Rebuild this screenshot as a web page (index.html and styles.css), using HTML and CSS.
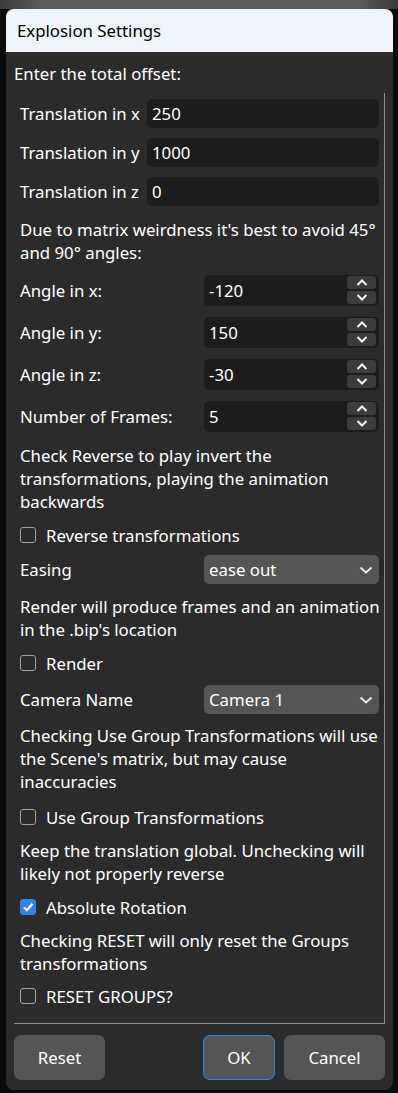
FILE: index.html
```html
<!DOCTYPE html>
<html>
<head>
<meta charset="utf-8">
<link rel="stylesheet" href="styles.css">
</head>
<body>
<div class="topstrip"></div>
<div class="window">
  <div class="titlebar">Explosion Settings</div>
  <div class="content">
    <div class="intro">Enter the total offset:</div>
    <div class="scroll">
      <div class="row"><span class="lbl">Translation in x</span><div class="field">250</div></div>
      <div class="row"><span class="lbl">Translation in y</span><div class="field">1000</div></div>
      <div class="row"><span class="lbl">Translation in z</span><div class="field">0</div></div>
      <p class="txt t1">Due to matrix weirdness it's best to avoid 45°<br>and 90° angles:</p>
      <div class="srow"><span class="lbl2">Angle in x:</span><div class="spin"><span>-120</span><div class="btns"><div class="sb"><svg viewBox="0 0 12 7"><path d="M1.5 6 L6 1.5 L10.5 6"/></svg></div><div class="sb"><svg viewBox="0 0 12 7"><path d="M1.5 1 L6 5.5 L10.5 1"/></svg></div></div></div></div>
      <div class="srow"><span class="lbl2">Angle in y:</span><div class="spin"><span>150</span><div class="btns"><div class="sb"><svg viewBox="0 0 12 7"><path d="M1.5 6 L6 1.5 L10.5 6"/></svg></div><div class="sb"><svg viewBox="0 0 12 7"><path d="M1.5 1 L6 5.5 L10.5 1"/></svg></div></div></div></div>
      <div class="srow"><span class="lbl2">Angle in z:</span><div class="spin"><span>-30</span><div class="btns"><div class="sb"><svg viewBox="0 0 12 7"><path d="M1.5 6 L6 1.5 L10.5 6"/></svg></div><div class="sb"><svg viewBox="0 0 12 7"><path d="M1.5 1 L6 5.5 L10.5 1"/></svg></div></div></div></div>
      <div class="srow"><span class="lbl2">Number of Frames:</span><div class="spin"><span>5</span><div class="btns"><div class="sb"><svg viewBox="0 0 12 7"><path d="M1.5 6 L6 1.5 L10.5 6"/></svg></div><div class="sb"><svg viewBox="0 0 12 7"><path d="M1.5 1 L6 5.5 L10.5 1"/></svg></div></div></div></div>
      <p class="txt t2">Check Reverse to play invert the<br>transformations, playing the animation<br>backwards</p>
      <div class="cb"><span class="box"></span>Reverse transformations</div>
      <div class="srow sel-row easing"><span class="lbl2">Easing</span><div class="select"><span>ease out</span><svg viewBox="0 0 14 8"><path d="M1.5 1.5 L7 6.5 L12.5 1.5"/></svg></div></div>
      <p class="txt t3">Render will produce frames and an animation<br>in the .bip's location</p>
      <div class="cb"><span class="box"></span>Render</div>
      <div class="srow sel-row"><span class="lbl2">Camera Name</span><div class="select"><span>Camera 1</span><svg viewBox="0 0 14 8"><path d="M1.5 1.5 L7 6.5 L12.5 1.5"/></svg></div></div>
      <p class="txt">Checking Use Group Transformations will use<br>the Scene's matrix, but may cause<br>inaccuracies</p>
      <div class="cb cb-group"><span class="box"></span>Use Group Transformations</div>
      <p class="txt">Keep the translation global. Unchecking will<br>likely not properly reverse</p>
      <div class="cb"><span class="box checked"><svg viewBox="0 0 12 12"><path d="M2.5 6.3 L5 8.8 L9.8 3.2"/></svg></span>Absolute Rotation</div>
      <p class="txt">Checking RESET will only reset the Groups<br>transformations</p>
      <div class="cb cb-reset"><span class="box"></span>RESET GROUPS?</div>
    </div>
    <div class="buttons">
      <div class="btn reset">Reset</div>
      <div class="spacer"></div>
      <div class="btn ok">OK</div>
      <div class="btn cancel">Cancel</div>
    </div>
  </div>
</div>
</body>
</html>
```
FILE: styles.css
```css
html, body {
  margin: 0;
  padding: 0;
}
body {
  background: #0b0b0b;
  width: 398px;
  height: 1093px;
  overflow: hidden;
  font-family: "Noto Sans", "Open Sans", sans-serif;
  font-size: 16.8px;
  color: #ffffff;
}
.topstrip {
  height: 9px;
  background: linear-gradient(to right, #3a3a3a, #5a5a5a 10%, #5a5a5a 90%, #3a3a3a);
}
.window {
  margin-left: 6px;
  width: 387px;
  height: 1081px;
  background: #2b2b2b;
  border-radius: 8px;
  overflow: hidden;
  display: flex;
  flex-direction: column;
}
.titlebar {
  height: 43px;
  background: #eef4f9;
  color: #000;
  font-size: 16.8px;
  line-height: 43px;
  padding-left: 11px;
  flex: none;
}
.content {
  padding: 0 8px;
  display: flex;
  flex-direction: column;
}
.intro {
  line-height: 23px;
  margin-top: 10px;
}
.scroll {
  margin-top: 8px;
  height: 931px;
  border-right: 1px solid #8c8c8c;
  border-bottom: 1px solid #8c8c8c;
  padding: 6px 5px 0 6px;
  display: flex;
  flex-direction: column;
  gap: 10px;
  box-sizing: border-box;
}
.row {
  display: flex;
  align-items: center;
  height: 29px;
}
.lbl {
  width: 127px;
  flex: none;
  white-space: nowrap;
}
.field {
  flex: 1;
  height: 29px;
  background: #1c1c1c;
  border-radius: 5px;
  line-height: 29px;
  padding-left: 5px;
}
.txt {
  margin: 0;
  line-height: 23px;
  white-space: nowrap;
}
.t1 { margin-top: 2px; }
.t2 { margin-top: 2px; }
.t3 { margin-top: 1px; }
.srow {
  display: flex;
  align-items: center;
  height: 32px;
}
.lbl2 {
  width: 184px;
  flex: none;
}
.spin {
  flex: 1;
  height: 31px;
  background: #1c1c1c;
  border-radius: 5px;
  display: flex;
  align-items: center;
  padding: 0 3px 0 5px;
}
.spin span {
  flex: 1;
}
.btns {
  display: flex;
  flex-direction: column;
  gap: 2px;
}
.sb {
  width: 29px;
  height: 13px;
  background: #3c3c3c;
  border-radius: 3px;
  display: flex;
  align-items: center;
  justify-content: center;
}
.sb svg {
  width: 12px;
  height: 7px;
  fill: none;
  stroke: #f2f2f2;
  stroke-width: 2;
}
.cb {
  display: flex;
  align-items: center;
  height: 24px;
}
.cb-group { margin-top: 2px; }
.cb-reset { margin-top: -1px; }
.box {
  width: 14px;
  height: 14px;
  border: 1.5px solid #a3a3a3;
  border-radius: 3px;
  margin-right: 10px;
  display: flex;
  align-items: center;
  justify-content: center;
}
.box.checked {
  background: #3584e4;
  border-color: #3584e4;
}
.box svg {
  width: 14px;
  height: 14px;
  fill: none;
  stroke: #fff;
  stroke-width: 1.7;
}
.sel-row {
  height: 29px;
}
.easing { margin-top: -2px; }
.select {
  flex: 1;
  height: 29px;
  background: #555555;
  border-radius: 5px;
  display: flex;
  align-items: center;
  padding: 0 6px 0 5px;
}
.select span {
  flex: 1;
}
.select svg {
  width: 14px;
  height: 8px;
  fill: none;
  stroke: #e8e8e8;
  stroke-width: 2;
}
.buttons {
  display: flex;
  margin-top: 11px;
  gap: 9px;
}
.spacer { flex: 1; }
.btn {
  height: 45px;
  background: #555555;
  border-radius: 7px;
  display: flex;
  align-items: center;
  justify-content: center;
  box-sizing: border-box;
}
.reset { width: 91px; }
.ok {
  width: 72px;
  border: 1px solid #2f86ea;
}
.cancel { width: 101px; }
```
